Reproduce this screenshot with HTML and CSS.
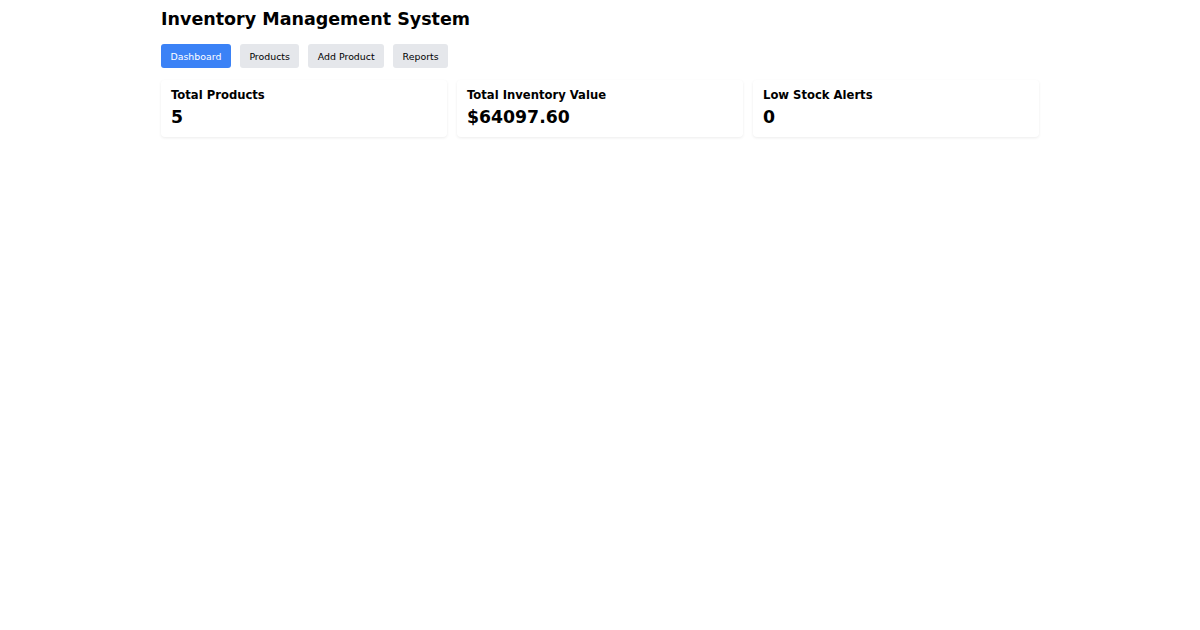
FILE: index.html
```html
<html>
<head>
	<title>Inventory Management System</title>
	<meta charset="UTF-8" />
	<link rel="stylesheet" href="styles.css">
</head>
<body>
<div class="container">
	<h1>Inventory Management System</h1>

	<div class="nav">
		<button class="nav-btn active">Dashboard</button>
		<button class="nav-btn">Products</button>
		<button class="nav-btn">Add Product</button>
		<button class="nav-btn">Reports</button>
	</div>

	<div class="stats">
		<div class="card">
			<h3>Total Products</h3>
			<p class="value">5</p>
		</div>
		<div class="card">
			<h3>Total Inventory Value</h3>
			<p class="value">$64097.60</p>
		</div>
		<div class="card">
			<h3>Low Stock Alerts</h3>
			<p class="value">0</p>
		</div>
	</div>
</div>
</body>
</html>
```

FILE: styles.css
```css
body {
	font-family: "DejaVu Sans", sans-serif;
	margin: 0;
	background: #fff;
	color: #000;
}

.container {
	max-width: 878px;
	margin: 0 auto;
	padding-top: 8px;
}

h1 {
	font-size: 17.5px;
	margin: 0 0 14px;
	line-height: 22px;
}

.nav {
	display: flex;
	gap: 9px;
	margin-bottom: 12px;
}

.nav-btn {
	font-family: "DejaVu Sans", sans-serif;
	font-size: 9.4px;
	height: 24px;
	padding: 0 9.5px;
	border: none;
	border-radius: 3px;
	background: #e5e7eb;
	color: #000;
}

.nav-btn.active {
	background: #3b82f6;
	color: #fff;
}

.stats {
	display: grid;
	grid-template-columns: repeat(3, 1fr);
	gap: 10px;
}

.card {
	background: #fff;
	border-radius: 4px;
	box-shadow: 0 1px 3px rgba(0, 0, 0, 0.08);
	padding: 8px 10px 9px;
}

.card h3 {
	font-size: 11.6px;
	margin: 0 0 4px;
	line-height: 14px;
}

.card .value {
	font-size: 17.3px;
	font-weight: bold;
	margin: 0;
	line-height: 22px;
}
```
